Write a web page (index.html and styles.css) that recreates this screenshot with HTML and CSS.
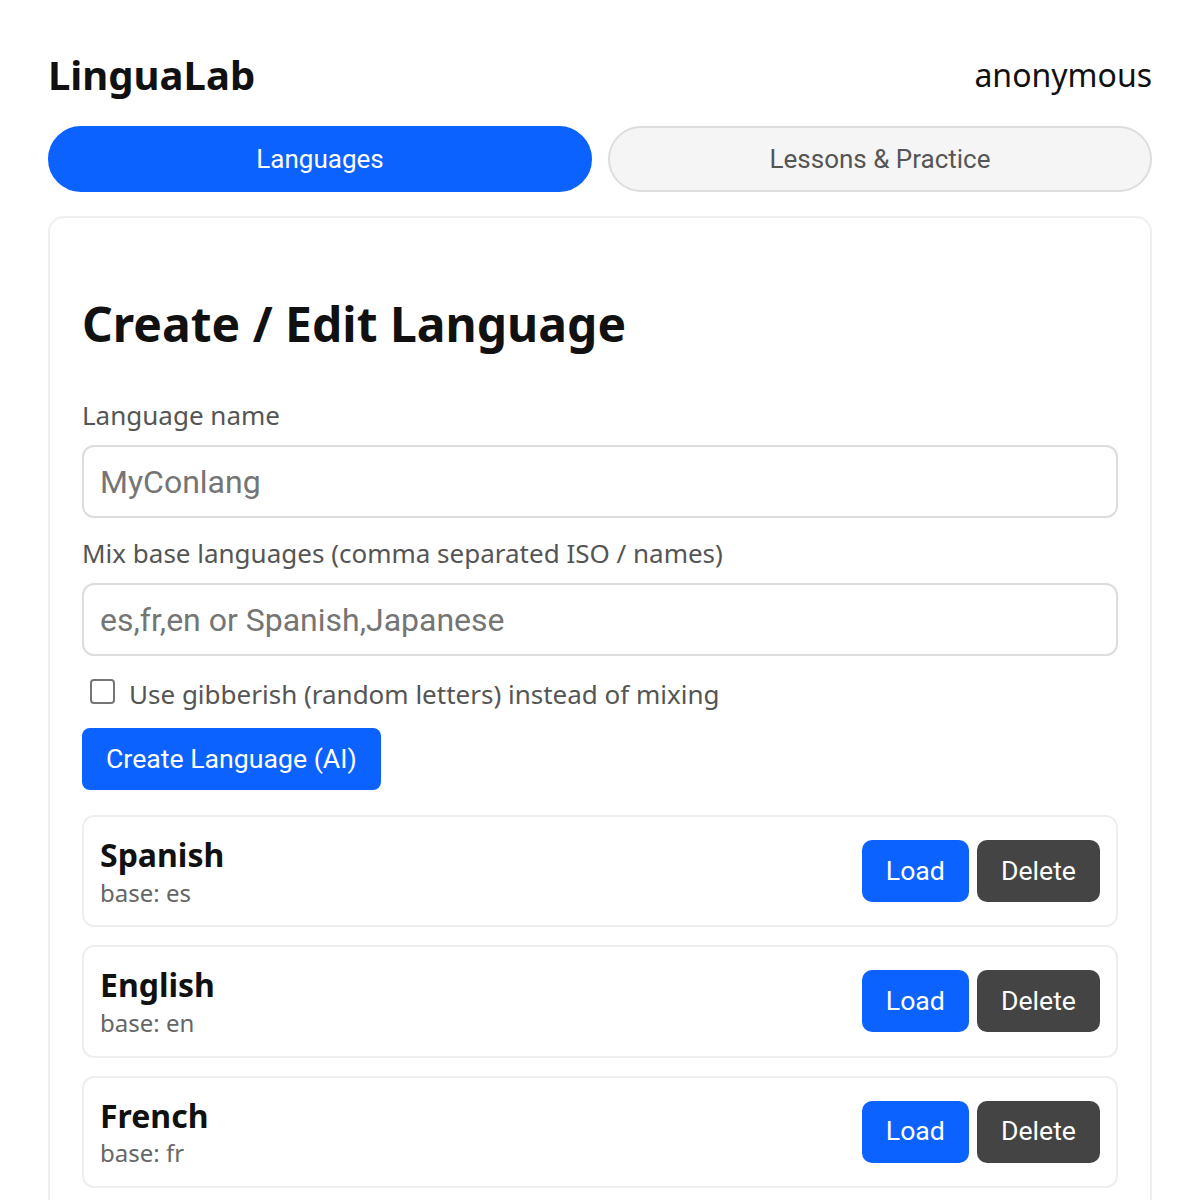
FILE: index.html
```html
<!DOCTYPE html>
<html lang="en">
<head>
<meta charset="utf-8">
<title>LinguaLab</title>
<link rel="stylesheet" href="styles.css">
</head>
<body>
<div class="app">
  <header class="topbar">
    <div class="brand">LinguaLab</div>
    <div class="user">anonymous</div>
  </header>
  <nav class="tabs">
    <button class="tab tab-active">Languages</button>
    <button class="tab">Lessons &amp; Practice</button>
  </nav>
  <section class="card">
    <h2 class="title">Create / Edit Language</h2>
    <label class="field-label" for="name">Language name</label>
    <input class="field" id="name" type="text" placeholder="MyConlang">
    <label class="field-label second" for="mix">Mix base languages (comma separated ISO / names)</label>
    <input class="field" id="mix" type="text" placeholder="es,fr,en or Spanish,Japanese">
    <label class="check-row">
      <input class="check" type="checkbox">
      <span>Use gibberish (random letters) instead of mixing</span>
    </label>
    <button class="btn btn-primary create">Create Language (AI)</button>
    <div class="list">
      <div class="item">
        <div class="item-info">
          <div class="item-name">Spanish</div>
          <div class="item-base">base: es</div>
        </div>
        <div class="item-actions">
          <button class="btn btn-primary">Load</button>
          <button class="btn btn-dark">Delete</button>
        </div>
      </div>
      <div class="item">
        <div class="item-info">
          <div class="item-name">English</div>
          <div class="item-base">base: en</div>
        </div>
        <div class="item-actions">
          <button class="btn btn-primary">Load</button>
          <button class="btn btn-dark">Delete</button>
        </div>
      </div>
      <div class="item">
        <div class="item-info">
          <div class="item-name">French</div>
          <div class="item-base">base: fr</div>
        </div>
        <div class="item-actions">
          <button class="btn btn-primary">Load</button>
          <button class="btn btn-dark">Delete</button>
        </div>
      </div>
    </div>
  </section>
</div>
</body>
</html>
```
FILE: styles.css
```css
html, body {
  margin: 0;
  padding: 0;
  background: #ffffff;
}
body {
  font-family: "Noto Sans", "Open Sans", sans-serif;
  color: #111111;
}
.app {
  padding: 47px 48px 0 48px;
}
.topbar {
  display: flex;
  justify-content: space-between;
  align-items: center;
}
.brand {
  font-size: 40px;
  font-weight: 700;
  color: #111;
}
.user {
  font-size: 32px;
  color: #111;
}
.tabs {
  display: flex;
  gap: 16px;
  margin-top: 24px;
}
.tab {
  flex: 1;
  font-family: Roboto, sans-serif;
  font-size: 26px;
  line-height: 32px;
  padding: 15px 20px;
  border-radius: 999px;
  border: 2px solid #dddddd;
  background: #f5f5f5;
  color: #555555;
}
.tab-active {
  background: #0b62fe;
  border-color: #0b62fe;
  color: #ffffff;
}
.card {
  margin-top: 24px;
  border: 2px solid #eeeeee;
  border-radius: 16px;
  padding: 32px 32px 40px 32px;
  min-height: 1000px;
}
.title {
  font-size: 48px;
  font-weight: 700;
  margin: 41px 0 40px 0;
  line-height: 65px;
}
.field-label {
  display: block;
  font-size: 26px;
  line-height: 38px;
  color: #555555;
  margin-bottom: 11px;
}
.field-label.second {
  margin-top: 16px;
}
.field {
  display: block;
  box-sizing: border-box;
  width: 100%;
  height: 73px;
  padding: 0 16px;
  font-family: Roboto, sans-serif;
  font-size: 32px;
  color: #222;
  border: 2px solid #dddddd;
  border-radius: 12px;
  background: #fff;
  outline: none;
}
.field::placeholder {
  color: #757575;
}
.check-row {
  display: flex;
  align-items: center;
  margin-top: 19px;
  font-size: 26px;
  line-height: 38px;
  color: #555555;
}
.check {
  appearance: none;
  -webkit-appearance: none;
  box-sizing: border-box;
  width: 25px;
  height: 25px;
  margin: 0 14px 0 8px;
  border: 2px solid #767676;
  border-radius: 4px;
  background: #fff;
  position: relative;
  top: -3px;
}
.btn {
  font-family: Roboto, sans-serif;
  font-size: 26.67px;
  line-height: 31px;
  height: 62px;
  padding: 0 24px;
  border: none;
  border-radius: 10px;
  color: #ffffff;
}
.btn-primary {
  background: #0b62fe;
}
.btn-dark {
  background: #444444;
}
.create {
  margin-top: 15px;
  height: 62px;
  border-radius: 8px;
}
.list {
  display: flex;
  flex-direction: column;
  gap: 18px;
  margin-top: 25px;
}
.item {
  display: flex;
  justify-content: space-between;
  align-items: center;
  border: 2px solid #eeeeee;
  border-radius: 12px;
  padding: 16px;
}
.item-name {
  font-size: 32px;
  font-weight: 700;
  line-height: 43.6px;
  color: #111;
}
.item-base {
  font-size: 24px;
  line-height: 32.7px;
  color: #666666;
}
.item-actions {
  display: flex;
  gap: 8px;
}
```
